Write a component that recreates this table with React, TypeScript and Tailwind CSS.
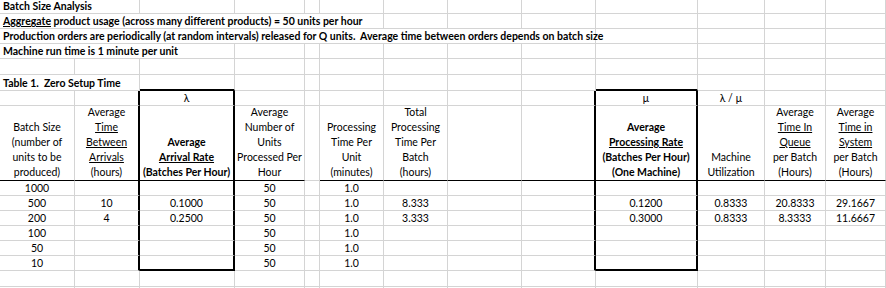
import React from "react";

const base = "border-b border-r border-[#d4d4d4] whitespace-nowrap overflow-visible";

type CellProps = { className?: string; children?: React.ReactNode };
function Cell({ className = "", children }: CellProps) {
  return <div className={`${base} ${className}`}>{children}</div>;
}

const U = ({ children }: { children: React.ReactNode }) => <span className="underline underline-offset-1">{children}</span>;

function TopText({ span, children }: { span: string; children: React.ReactNode }) {
  return <div className={`${span} border-b border-r border-[#d4d4d4] whitespace-nowrap pl-[3px] font-bold flex items-end leading-[14px]`}>{children}</div>;
}

const data = [
  ["1000", "", "", "50", "1.0", "", "", "", "", ""],
  ["500", "10", "0.1000", "50", "1.0", "8.333", "0.1200", "0.8333", "20.8333", "29.1667"],
  ["200", "4", "0.2500", "50", "1.0", "3.333", "0.3000", "0.8333", "8.3333", "11.6667"],
  ["100", "", "", "50", "1.0", "", "", "", "", ""],
  ["50", "", "", "50", "1.0", "", "", "", "", ""],
  ["10", "", "", "50", "1.0", "", "", "", "", ""],
];

export default function App() {
  return (
    <div className="w-[886px] h-[288px] overflow-hidden bg-white text-black font-['Lato',sans-serif] text-[10.5px]">
      <div className="grid grid-cols-[75px_65px_95px_70px_15px_64px_64px_74px_74px_102px_67px_61px_60px] grid-rows-[14px_15px_15px_15px_16px_16px_15px_75px_15px_15px_15px_15px_15px_15px_16px_15px]">
        {/* Row 1 */}
        <TopText span="col-span-2">Batch Size Analysis</TopText>
        <Cell /><Cell /><Cell /><Cell /><Cell /><Cell /><Cell /><Cell /><Cell /><Cell /><Cell />
        {/* Row 2 */}
        <TopText span="col-span-6"><span><U>Aggregate</U> product usage (across many different products) = 50 units per hour</span></TopText>
        <Cell /><Cell /><Cell /><Cell /><Cell /><Cell /><Cell />
        {/* Row 3 */}
        <TopText span="col-span-9">Production orders are periodically (at random intervals) released for Q units.&nbsp; Average time between orders depends on batch size</TopText>
        <Cell /><Cell /><Cell /><Cell />
        {/* Row 4 */}
        <TopText span="col-span-3">Machine run time is 1 minute per unit</TopText>
        <Cell /><Cell /><Cell /><Cell /><Cell /><Cell /><Cell /><Cell /><Cell /><Cell />
        {/* Row 5 */}
        <Cell /><Cell /><Cell /><Cell /><Cell /><Cell /><Cell /><Cell /><Cell /><Cell /><Cell /><Cell /><Cell />
        {/* Row 6 */}
        <TopText span="col-span-2">Table 1.&nbsp; Zero Setup Time</TopText>
        <Cell className="!border-b-2 !border-b-black" /><Cell /><Cell /><Cell /><Cell /><Cell /><Cell />
        <Cell className="!border-b-2 !border-b-black" /><Cell /><Cell /><Cell />
        {/* Row 7 */}
        <Cell /><Cell className="!border-r-2 !border-r-black" />
        <Cell className="!border-r-2 !border-r-black text-center leading-[14px]">λ</Cell>
        <Cell /><Cell /><Cell /><Cell /><Cell />
        <Cell className="!border-r-2 !border-r-black" />
        <Cell className="!border-r-2 !border-r-black text-center leading-[14px]">µ</Cell>
        <Cell className="text-center leading-[14px]">λ / µ</Cell>
        <Cell /><Cell />
        {/* Row 8 header */}
        <Cell className="!border-b-black flex flex-col justify-end items-center leading-[15px]">
          <div>Batch Size</div><div>(number of</div><div>units to be</div><div>produced)</div>
        </Cell>
        <Cell className="!border-b-black !border-r-2 !border-r-black flex flex-col justify-end items-center leading-[15px]">
          <div>Average</div><div><U>Time </U></div><div><U>Between </U></div><div><U>Arrivals </U></div><div>(hours)</div>
        </Cell>
        <Cell className="!border-b-black !border-r-2 !border-r-black flex flex-col justify-end items-center leading-[15px] font-bold">
          <div>Average</div><div><U>Arrival Rate </U></div><div>(Batches Per Hour)</div>
        </Cell>
        <Cell className="!border-b-black flex flex-col justify-end items-center leading-[15px]">
          <div>Average</div><div>Number of</div><div>Units</div><div>Processed Per</div><div>Hour</div>
        </Cell>
        <Cell />
        <Cell className="!border-b-black flex flex-col justify-end items-center leading-[15px]">
          <div>Processing</div><div>Time Per</div><div>Unit</div><div>(minutes)</div>
        </Cell>
        <Cell className="!border-b-black flex flex-col justify-end items-center leading-[15px]">
          <div>Total</div><div>Processing</div><div>Time Per</div><div>Batch</div><div>(hours)</div>
        </Cell>
        <Cell className="!border-b-black" />
        <Cell className="!border-b-black !border-r-2 !border-r-black" />
        <Cell className="!border-b-black !border-r-2 !border-r-black flex flex-col justify-end items-center leading-[15px] font-bold">
          <div>Average</div><div><U>Processing Rate</U></div><div>(Batches Per Hour)</div><div>(One Machine)</div>
        </Cell>
        <Cell className="!border-b-black flex flex-col justify-end items-center leading-[15px]">
          <div>Machine</div><div>Utilization</div>
        </Cell>
        <Cell className="!border-b-black flex flex-col justify-end items-center leading-[15px]">
          <div>Average</div><div><U>Time In </U></div><div><U>Queue</U></div><div>per Batch</div><div>(Hours)</div>
        </Cell>
        <Cell className="!border-b-black flex flex-col justify-end items-center leading-[15px]">
          <div>Average</div><div><U>Time in </U></div><div><U>System</U></div><div>per Batch</div><div>(Hours)</div>
        </Cell>
        {/* Data rows */}
        {data.map((r, i) => {
          const last = i === data.length - 1;
          return (
            <React.Fragment key={i}>
              <Cell className="text-center leading-[15px]">{r[0]}</Cell>
              <Cell className="text-center leading-[15px] !border-r-2 !border-r-black">{r[1]}</Cell>
              <Cell className={last ? "text-center leading-[14px] !border-r-2 !border-r-black !border-b-2 !border-b-black" : "text-center leading-[15px] !border-r-2 !border-r-black"}>{r[2]}</Cell>
              <Cell className="text-center leading-[15px]">{r[3]}</Cell>
              <Cell />
              <Cell className="text-center leading-[15px]">{r[4]}</Cell>
              <Cell className="text-center leading-[15px]">{r[5]}</Cell>
              <Cell />
              <Cell className="!border-r-2 !border-r-black" />
              <Cell className={last ? "text-center leading-[14px] !border-r-2 !border-r-black !border-b-2 !border-b-black" : "text-center leading-[15px] !border-r-2 !border-r-black"}>{r[6]}</Cell>
              <Cell className="text-center leading-[15px]">{r[7]}</Cell>
              <Cell className="text-center leading-[15px]">{r[8]}</Cell>
              <Cell className="text-center leading-[15px]">{r[9]}</Cell>
            </React.Fragment>
          );
        })}
        {/* Empty rows */}
        <Cell /><Cell /><Cell /><Cell /><Cell /><Cell /><Cell /><Cell /><Cell /><Cell /><Cell /><Cell /><Cell />
        <Cell /><Cell /><Cell /><Cell /><Cell /><Cell /><Cell /><Cell /><Cell /><Cell /><Cell /><Cell /><Cell />
      </div>
    </div>
  );
}
